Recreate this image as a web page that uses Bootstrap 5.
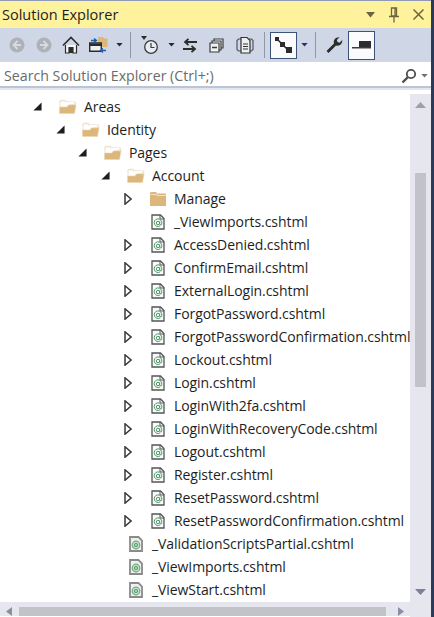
<!DOCTYPE html>
<html lang="en">
<head>
<meta charset="utf-8">
<title>Solution Explorer</title>
<link href="https://cdn.jsdelivr.net/npm/bootstrap@5.3.0/dist/css/bootstrap.min.css" rel="stylesheet">
<style>
html,body{height:617px;overflow:hidden;background:#fff}
body{font-family:"Open Sans","Liberation Sans",sans-serif;color:#1e1e1e}
.se-win{width:431px;height:617px;border-top:1px solid #8e9ab5;box-shadow:3px 0 0 #2b3a58;overflow:hidden}
.se-title{height:27px;background:#fff29d;padding:0 7px 0 2px;font-size:14.5px}
.se-title svg{display:block}
.se-tools{height:34px;background:#cfd6e5;padding-left:3px}
.tl{display:flex;align-items:center;justify-content:center;height:34px;flex:none}
.w27{width:27px}.w14{width:14px}.w12{width:12px}.w30{width:30px}.w31{width:31px}.w26{width:26px}.w28{width:28px}.w20{width:20px}
.se-sep{width:1px;height:26px;background:#8f98a8;margin:0 4px;flex:none}
.se-sep-w{margin-right:5px}
.se-sep-x{margin-right:8px}
.se-box{width:27px;height:27px;background:#fbfbfd;border:1px solid #3b5379;display:flex;align-items:center;justify-content:center;flex:none}
.se-box-t{height:29px}
.se-search{height:26px;background:#fff;border-bottom:2px solid #bcc5d6;padding:3px 3px 0 4px;font-size:14.2px;color:#6a6a6a}
.se-gap{height:2px;background:#e2e6ef}
.se-body{height:527px}
.se-left{width:410px;flex:none}
.se-list{height:512px;overflow:hidden;padding-top:5px;white-space:nowrap}
.se-row{height:23px;font-size:14px;line-height:23px;display:flex;align-items:center;letter-spacing:-.07px}
.se-row svg{flex:none;display:block}
.arr{width:23px;display:flex;justify-content:center;flex:none}
.ico{width:24px;margin-left:7px;display:flex;justify-content:center;flex:none}
.lab{margin-left:4px}
.l0{padding-left:26px}.l1{padding-left:49px}.l2{padding-left:71px}.l3{padding-left:94px}.l4{padding-left:116px}
.se-v{width:21px;flex:none;background:#e6e7ee;margin-top:4px;padding-top:8px}
.se-v svg{display:block;margin:0 auto}
.se-vthumb{width:11px;height:214px;background:#c2c3c9;margin:65px auto 202px}
.se-h{height:14px;background:#e6e7ee;padding-top:5px}
.se-hthumb{width:367px;height:9px;background:#c2c3c9;margin:0 12px 0 7px}
.se-hl{margin-left:6px}
</style>
</head>
<body>
<svg width="0" height="0" class="position-absolute">
<defs>
<symbol id="i-open" viewBox="0 0 18 16"><path d="M1 4V2.500L2 1.500H6L7 3H15.500L16.500 4V7" fill="#fff" stroke="#efe3cd" stroke-width="1.500"/><path d="M16 2.500V5L9 6.500L8 8.500H1V4" fill="#fff" stroke="#efe3cd"/><path d="M.5 8H8L9.500 6H17L15.500 14.500H.5Z" fill="#dcb67a" stroke="#ead6b0" stroke-width=".6"/></symbol>
<symbol id="i-closed" viewBox="0 0 18 16"><path d="M1 3V2L2 1H7L8 2.500H17V15H1Z" fill="#dcb67a"/><path d="M1.500 3.500H7.500L8.500 4.500H17" fill="none" stroke="#f1e3c6" stroke-width="1.200"/></symbol>
<symbol id="i-exp" viewBox="0 0 10 10"><path d="M9.500 .5V9.500H.5Z" fill="#1e1e1e"/></symbol>
<symbol id="i-col" viewBox="0 0 8 12"><path d="M1 .8L7 6L1 11.200Z" fill="#fff" stroke="#3a3a3a" stroke-width="1.500"/></symbol>
<symbol id="i-cs" viewBox="0 0 14 16"><path d="M1 1H9.500L13 4.500V15H1Z" fill="#fafafa" stroke="#555" stroke-width="1.300"/><path d="M9 1V5H13" fill="none" stroke="#555"/><path d="M9.200 11.800A3.800 3.800 0 1 1 10.800 9V9.800A1 1 0 0 1 8.700 9.800V7.500M8.700 9A1.700 1.700 0 1 1 5.300 9A1.700 1.700 0 1 1 8.700 9" fill="none" stroke="#4d9a66" stroke-width="1"/></symbol>
<symbol id="i-cs2" viewBox="0 0 14 16"><path d="M1 1H9.500L13 4.500V15H1Z" fill="#eef1ee" stroke="#8a8a8a" stroke-width="1.800"/><circle cx="7" cy="9" r="3.800" fill="#cfe0d2" stroke="#6dab80" stroke-width="1.200"/><circle cx="7" cy="9" r="1.500" fill="none" stroke="#4a9863" stroke-width="1.100"/></symbol>
<symbol id="i-car" viewBox="0 0 8 5"><path d="M0 0H8L4 4.500Z" fill="#2b2b2b"/></symbol>
</defs>
</svg>
<div class="se-win d-flex flex-column">
  <div class="se-title d-flex align-items-center">
    <span class="flex-grow-1">Solution Explorer</span>
    <svg class="me-2" width="9" height="6" viewBox="0 0 9 6"><path d="M0 0H9L4.500 5.500Z" fill="#6e6340"/></svg>
    <svg class="mx-1" width="14" height="16" viewBox="0 0 14 16" fill="none" stroke="#6e6340" stroke-width="1.300"><path d="M4.500 1H9.500V9H4.500ZM8 1.500V8.500M2 9.500H12M7 10V15.500"/></svg>
    <svg class="ms-2" width="11" height="11" viewBox="0 0 11 11" fill="none" stroke="#6e6340" stroke-width="1.500"><path d="M.5 .5L10.500 10.500M10.500 .5L.5 10.500"/></svg>
  </div>
  <div class="se-tools d-flex align-items-center">
    <div class="tl w27"><svg width="16" height="16" viewBox="0 0 16 16"><circle cx="8" cy="8" r="7.500" fill="#aeb1b8"/><path d="M8.500 4L4.500 8L8.500 12M5 8H12" fill="none" stroke="#d5dae4" stroke-width="1.800"/></svg></div>
    <div class="tl w27"><svg width="16" height="16" viewBox="0 0 16 16"><circle cx="8" cy="8" r="7.500" fill="#aeb1b8"/><path d="M7.500 4L11.500 8L7.500 12M11 8H4" fill="none" stroke="#d5dae4" stroke-width="1.800"/></svg></div>
    <div class="tl w27"><svg width="18" height="18" viewBox="0 0 18 18"><path d="M1 9.500L9 1.500L17 9.500" fill="none" stroke="#2c2c2c" stroke-width="1.600"/><path d="M3.500 9V17H7V11.500H11V17H14.500V9" fill="#f5f6f8" stroke="#2c2c2c" stroke-width="1.200"/><path d="M7 11.500H11V17H7Z" fill="#2c2c2c"/></svg></div>
    <div class="tl w28"><svg width="19" height="18" viewBox="0 0 19 18"><path d="M9 1H14L15 2.500H18.500V11H9Z" fill="#dcb67a"/><path d="M.7 7H12.300V15.300H.7Z" fill="#eef0f4" stroke="#2c2c2c" stroke-width="1.400"/><path d="M1 7.500H12V10H1Z" fill="#2c2c2c"/><path d="M2 4.500H7M5 2.500L7.500 4.500L5 6.500" fill="none" stroke="#1c5fa8" stroke-width="1.400"/><path d="M17 14.500H12M14 12.500L11.500 14.500L14 16.500" fill="none" stroke="#1c5fa8" stroke-width="1.400"/></svg></div>
    <div class="tl w14"><svg width="7" height="4" viewBox="0 0 8 5"><use href="#i-car"/></svg></div>
    <div class="se-sep"></div>
    <div class="tl w30"><svg width="20" height="20" viewBox="0 0 20 20"><path d="M1 1H7L4 5Z" fill="#2c2c2c"/><circle cx="11" cy="12" r="6.300" fill="#e8ebf1" stroke="#3a3a3a" stroke-width="1.300"/><path d="M11 8V12.500H14.500" fill="none" stroke="#3a3a3a" stroke-width="1.200"/></svg></div>
    <div class="tl w12"><svg width="7" height="4" viewBox="0 0 8 5"><use href="#i-car"/></svg></div>
    <div class="tl w26"><svg width="14" height="15" viewBox="0 0 14 15" fill="none" stroke="#2c2c2c" stroke-width="1.800"><path d="M14 4H2M5.500 .8L2 4L5.500 7.200M0 11H12M8.500 7.800L12 11L8.500 14.200"/></svg></div>
    <div class="tl w26"><svg width="15" height="15" viewBox="0 0 15 15" fill="#eef0f4" stroke="#3a3a3a" stroke-width="1.200"><path d="M5 1H14V10H5Z"/><path d="M3 3H12V12H3Z"/><path d="M1 5H10V14H1Z"/><path d="M3 9.500H8" stroke-width="1.500"/></svg></div>
    <div class="tl w31"><svg width="18" height="18" viewBox="0 0 18 18" fill="none" stroke="#555" stroke-width="1.200"><path d="M5 3H2.500L1 4.500V13.500L2.500 15H5M13 3H15.500L17 4.500V13.500L15.500 15H13"/><path d="M5 4V1.500H11L14 4.500V17H5Z" fill="#eef0f4" stroke="#333"/><path d="M7 8H12M7 10.500H12M7 13H12" stroke="#333"/></svg></div>
    <div class="se-sep se-sep-w"></div>
    <div class="se-box"><svg width="19" height="18" viewBox="0 0 19 18" fill="#2c2c2c"><path d="M1 1H5V5H1ZM6 6H11V11H6ZM12 11H18V17H12Z"/><path d="M4 4L7 7M10 10L13 13" stroke="#2c2c2c" stroke-width="1.500"/></svg></div>
    <div class="tl w14"><svg width="7" height="4" viewBox="0 0 8 5"><path d="M0 0H8L4 4.500Z" fill="#1d3a66"/></svg></div>
    <div class="se-sep se-sep-x"></div>
    <div class="tl w20"><svg width="18" height="18" viewBox="0 0 18 18"><path d="M1.500 15L9 7.500C8 4 10.500 1 14.500 1.200L11.800 4L12.500 6L14.500 6.700L17.300 4C17.500 8 14.500 10.500 11 9.500L3.500 17Z" fill="#2c2c2c"/></svg></div>
    <div class="se-box se-box-t ms-1"><svg width="19" height="8" viewBox="0 0 19 8"><path d="M7 0H19V6H7Z" fill="#2c2c2c"/><path d="M0 6H19V7.500H0Z" fill="#3c3c3c"/></svg></div>
  </div>
  <div class="se-search d-flex align-items-center">
    <span class="flex-grow-1">Search Solution Explorer (Ctrl+;)</span>
    <svg width="16" height="16" viewBox="0 0 16 16" fill="none" stroke="#4d4d4d"><circle cx="10" cy="6" r="4.200" stroke-width="1.800"/><path d="M7 9L1.500 14.500" stroke-width="2.400"/></svg>
    <svg class="ms-1" width="7" height="4" viewBox="0 0 8 5"><path d="M0 0H8L4 4.500Z" fill="#707070"/></svg>
  </div>
  <div class="se-gap"></div>
  <div class="se-body d-flex">
    <div class="se-left">
      <div class="se-list">
        <div class="se-row l0"><span class="arr"><svg width="9" height="9"><use href="#i-exp"/></svg></span><span class="ico"><svg width="18" height="16"><use href="#i-open"/></svg></span><span class="lab">Areas</span></div>
        <div class="se-row l1"><span class="arr"><svg width="9" height="9"><use href="#i-exp"/></svg></span><span class="ico"><svg width="18" height="16"><use href="#i-open"/></svg></span><span class="lab">Identity</span></div>
        <div class="se-row l2"><span class="arr"><svg width="9" height="9"><use href="#i-exp"/></svg></span><span class="ico"><svg width="18" height="16"><use href="#i-open"/></svg></span><span class="lab">Pages</span></div>
        <div class="se-row l3"><span class="arr"><svg width="9" height="9"><use href="#i-exp"/></svg></span><span class="ico"><svg width="18" height="16"><use href="#i-open"/></svg></span><span class="lab">Account</span></div>
        <div class="se-row l4"><span class="arr"><svg width="8" height="12"><use href="#i-col"/></svg></span><span class="ico"><svg width="18" height="16"><use href="#i-closed"/></svg></span><span class="lab">Manage</span></div>
        <div class="se-row l4"><span class="arr"></span><span class="ico"><svg width="14" height="16"><use href="#i-cs"/></svg></span><span class="lab">_ViewImports.cshtml</span></div>
        <div class="se-row l4"><span class="arr"><svg width="8" height="12"><use href="#i-col"/></svg></span><span class="ico"><svg width="14" height="16"><use href="#i-cs"/></svg></span><span class="lab">AccessDenied.cshtml</span></div>
        <div class="se-row l4"><span class="arr"><svg width="8" height="12"><use href="#i-col"/></svg></span><span class="ico"><svg width="14" height="16"><use href="#i-cs"/></svg></span><span class="lab">ConfirmEmail.cshtml</span></div>
        <div class="se-row l4"><span class="arr"><svg width="8" height="12"><use href="#i-col"/></svg></span><span class="ico"><svg width="14" height="16"><use href="#i-cs"/></svg></span><span class="lab">ExternalLogin.cshtml</span></div>
        <div class="se-row l4"><span class="arr"><svg width="8" height="12"><use href="#i-col"/></svg></span><span class="ico"><svg width="14" height="16"><use href="#i-cs"/></svg></span><span class="lab">ForgotPassword.cshtml</span></div>
        <div class="se-row l4"><span class="arr"><svg width="8" height="12"><use href="#i-col"/></svg></span><span class="ico"><svg width="14" height="16"><use href="#i-cs"/></svg></span><span class="lab">ForgotPasswordConfirmation.cshtml</span></div>
        <div class="se-row l4"><span class="arr"><svg width="8" height="12"><use href="#i-col"/></svg></span><span class="ico"><svg width="14" height="16"><use href="#i-cs"/></svg></span><span class="lab">Lockout.cshtml</span></div>
        <div class="se-row l4"><span class="arr"><svg width="8" height="12"><use href="#i-col"/></svg></span><span class="ico"><svg width="14" height="16"><use href="#i-cs"/></svg></span><span class="lab">Login.cshtml</span></div>
        <div class="se-row l4"><span class="arr"><svg width="8" height="12"><use href="#i-col"/></svg></span><span class="ico"><svg width="14" height="16"><use href="#i-cs"/></svg></span><span class="lab">LoginWith2fa.cshtml</span></div>
        <div class="se-row l4"><span class="arr"><svg width="8" height="12"><use href="#i-col"/></svg></span><span class="ico"><svg width="14" height="16"><use href="#i-cs"/></svg></span><span class="lab">LoginWithRecoveryCode.cshtml</span></div>
        <div class="se-row l4"><span class="arr"><svg width="8" height="12"><use href="#i-col"/></svg></span><span class="ico"><svg width="14" height="16"><use href="#i-cs"/></svg></span><span class="lab">Logout.cshtml</span></div>
        <div class="se-row l4"><span class="arr"><svg width="8" height="12"><use href="#i-col"/></svg></span><span class="ico"><svg width="14" height="16"><use href="#i-cs"/></svg></span><span class="lab">Register.cshtml</span></div>
        <div class="se-row l4"><span class="arr"><svg width="8" height="12"><use href="#i-col"/></svg></span><span class="ico"><svg width="14" height="16"><use href="#i-cs"/></svg></span><span class="lab">ResetPassword.cshtml</span></div>
        <div class="se-row l4"><span class="arr"><svg width="8" height="12"><use href="#i-col"/></svg></span><span class="ico"><svg width="14" height="16"><use href="#i-cs"/></svg></span><span class="lab">ResetPasswordConfirmation.cshtml</span></div>
        <div class="se-row l3"><span class="arr"></span><span class="ico"><svg width="14" height="16"><use href="#i-cs2"/></svg></span><span class="lab">_ValidationScriptsPartial.cshtml</span></div>
        <div class="se-row l3"><span class="arr"></span><span class="ico"><svg width="14" height="16"><use href="#i-cs2"/></svg></span><span class="lab">_ViewImports.cshtml</span></div>
        <div class="se-row l3"><span class="arr"></span><span class="ico"><svg width="14" height="16"><use href="#i-cs2"/></svg></span><span class="lab">_ViewStart.cshtml</span></div>
      </div>
      <div class="se-h d-flex">
        <svg class="se-hl" width="6" height="9" viewBox="0 0 6 9"><path d="M6 0V9L0 4.500Z" fill="#8a8fa6"/></svg>
        <div class="se-hthumb"></div>
        <svg width="6" height="9" viewBox="0 0 6 9"><path d="M0 0V9L6 4.500Z" fill="#8a8fa6"/></svg>
      </div>
    </div>
    <div class="se-v">
      <svg width="11" height="6" viewBox="0 0 11 6"><path d="M0 6H11L5.500 0Z" fill="#9da0ad"/></svg>
      <div class="se-vthumb"></div>
      <svg width="11" height="6" viewBox="0 0 11 6"><path d="M0 0H11L5.500 6Z" fill="#7d8098"/></svg>
    </div>
  </div>
</div>
</body>
</html>
